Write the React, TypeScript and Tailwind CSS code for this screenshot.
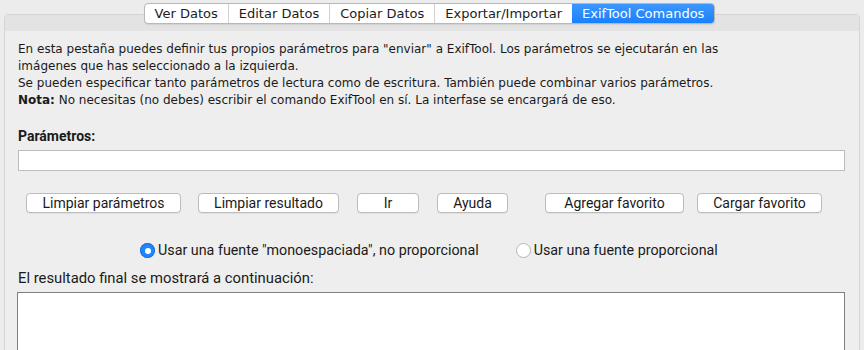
import React from 'react';

const tabs = ['Ver Datos', 'Editar Datos', 'Copiar Datos', 'Exportar/Importar', 'ExifTool Comandos'];

const buttons = [
  { label: 'Limpiar parámetros', cls: 'w-[155px]' },
  { label: 'Limpiar resultado', cls: 'w-[141px] ml-[17px]' },
  { label: 'Ir', cls: 'w-[62px] ml-[18px]' },
  { label: 'Ayuda', cls: 'w-[71px] ml-[18px]' },
  { label: 'Agregar favorito', cls: 'w-[139px] ml-[37px]' },
  { label: 'Cargar favorito', cls: 'w-[125px] ml-[13px]' },
];

const lucida = { fontFamily: '"DejaVu Sans", "Noto Sans", sans-serif' };
const narrow = { fontFamily: '"Liberation Sans Narrow", "Roboto", "Liberation Sans", sans-serif' };

function Radio({ checked, label }: { checked: boolean; label: string }) {
  return (
    <label className="flex items-center gap-[3px]">
      {checked ? (
        <span className="flex h-[15px] w-[15px] items-center justify-center rounded-full bg-[#1f86fb] shadow-[inset_0_0_0_1px_#1a74e0]">
          <span className="h-[6px] w-[6px] rounded-full bg-white" />
        </span>
      ) : (
        <span className="h-[15px] w-[15px] rounded-full border border-[#b4b4b4] bg-white" />
      )}
      <span className="text-[14.3px] leading-[17px] text-[#1a1a1a]" style={narrow}>
        {label}
      </span>
    </label>
  );
}

export default function App() {
  return (
    <div className="h-[350px] w-[864px] overflow-hidden bg-[#ececec]">
      <div className="flex flex-col pt-[3px]">
        {/* tab strip */}
        <div className="relative z-10 flex justify-center pr-[5px]">
          <div className="flex h-[21px] overflow-hidden rounded-[4px] border border-[#b8b8b8] bg-white shadow-[0_1px_1px_rgba(0,0,0,0.08)]">
            {tabs.map((t, i) => {
              const sel = i === tabs.length - 1;
              return (
                <div
                  key={t}
                  className={[
                    'flex items-center px-[10px] text-[13px] leading-none',
                    i > 0 && !sel ? 'border-l border-[#d2d2d2]' : '',
                    sel ? 'bg-gradient-to-b from-[#3b97fd] to-[#1a80fb] text-white' : 'text-[#1c1c1c]',
                  ].join(' ')}
                  style={lucida}
                >
                  {t}
                </div>
              );
            })}
          </div>
        </div>

        {/* panel */}
        <div className="mx-[4px] -mt-[10px] h-[400px] rounded-t-[4px] border border-[#d4d4d4] bg-[#eeeeee]">
          <div className="h-[16px] bg-[#e3e3e3]" />
          <div className="pl-[13px] pr-[14px]">
            <div className="mt-[10px] text-[12px] leading-[17px] text-[#1a1a1a]" style={lucida}>
              <p>
                En esta pestaña puedes definir tus propios parámetros para "enviar" a ExifTool. Los parámetros se ejecutarán en las
              </p>
              <p>imágenes que has seleccionado a la izquierda.</p>
              <p>
                Se pueden especificar tanto parámetros de lectura como de escritura. También puede combinar varios parámetros.
              </p>
              <p>
                <b>Nota:</b> No necesitas (no debes) escribir el comando ExifTool en sí. La interfase se encargará de eso.
              </p>
            </div>

            <div className="mt-[19px] text-[14px] font-bold leading-[17px] text-[#1a1a1a]" style={narrow}>
              Parámetros:
            </div>
            <div className="mt-[5px] h-[21px] border border-[#bdbdbd] bg-white" />

            <div className="mt-[22px] flex pl-[8px]">
              {buttons.map((b) => (
                <button
                  key={b.label}
                  className={`${b.cls} flex h-[20px] items-center justify-center rounded-[4px] border border-[#bcbcbc] bg-white text-[14px] text-[#1a1a1a] shadow-[0_1px_0_rgba(0,0,0,0.06)]`}
                  style={narrow}
                >
                  {b.label}
                </button>
              ))}
            </div>

            <div className="mt-[29px] flex pl-[122px]">
              <Radio checked label={'Usar una fuente "monoespaciada", no proporcional'} />
              <div className="ml-[37px]">
                <Radio checked={false} label="Usar una fuente proporcional" />
              </div>
            </div>

            <div className="mt-[11px] text-[14.8px] leading-[17px] text-[#1a1a1a]" style={narrow}>
              El resultado final se mostrará a continuación:
            </div>
            <div className="mt-[5px] -ml-[1px] h-[80px] border border-[#7f7f7f] bg-white" />
          </div>
        </div>
      </div>
    </div>
  );
}
